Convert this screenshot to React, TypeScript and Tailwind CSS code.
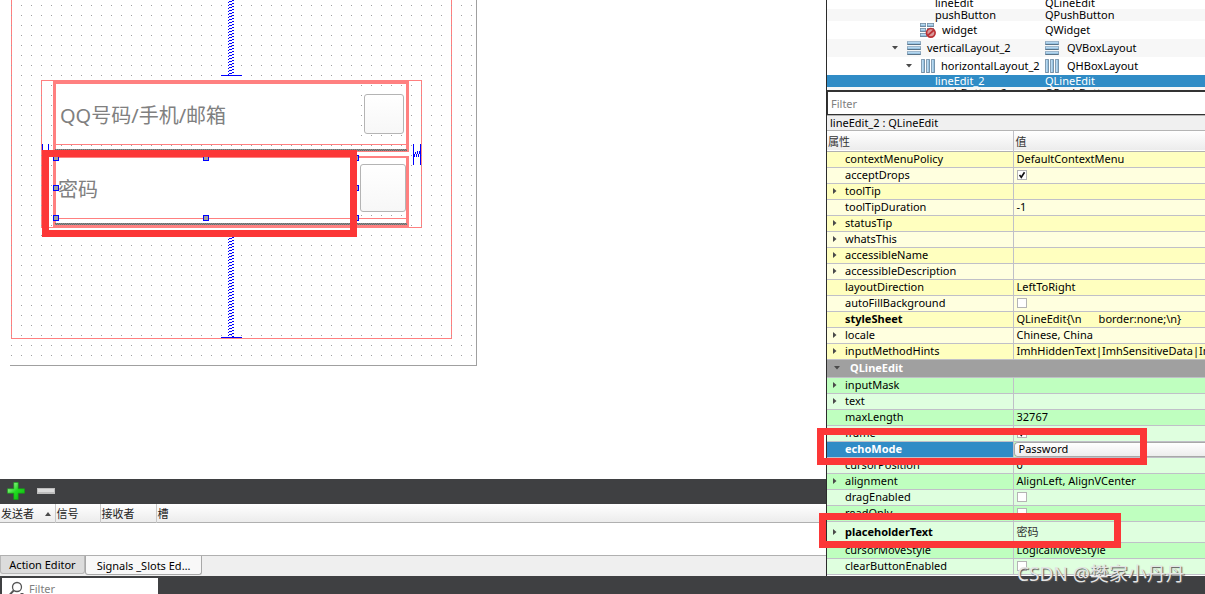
import React from "react";

type Tone = "yellow" | "green";

interface Prop {
  name: string;
  value?: string;
  check?: boolean;
  expandable?: boolean;
  bold?: boolean;
  tall?: boolean;
}

const WIDGET_PROPS: Prop[] = [
  { name: "contextMenuPolicy", value: "DefaultContextMenu" },
  { name: "acceptDrops", check: true },
  { name: "toolTip", expandable: true },
  { name: "toolTipDuration", value: "-1" },
  { name: "statusTip", expandable: true },
  { name: "whatsThis", expandable: true },
  { name: "accessibleName", expandable: true },
  { name: "accessibleDescription", expandable: true },
  { name: "layoutDirection", value: "LeftToRight" },
  { name: "autoFillBackground", check: false },
  { name: "styleSheet", value: "QLineEdit{\\n      border:none;\\n}", bold: true },
  { name: "locale", value: "Chinese, China", expandable: true },
  { name: "inputMethodHints", value: "ImhHiddenText|ImhSensitiveData|ImhNoAutoUppercase", expandable: true },
];

const LINE_EDIT_PROPS: Prop[] = [
  { name: "inputMask", expandable: true },
  { name: "text", expandable: true },
  { name: "maxLength", value: "32767" },
  { name: "frame", check: true },
  { name: "echoMode", value: "Password" },
  { name: "cursorPosition", value: "0" },
  { name: "alignment", value: "AlignLeft, AlignVCenter", expandable: true },
  { name: "dragEnabled", check: false },
  { name: "readOnly", check: false },
  { name: "placeholderText", value: "密码", expandable: true, bold: true, tall: true },
  { name: "cursorMoveStyle", value: "LogicalMoveStyle" },
  { name: "clearButtonEnabled", check: false },
];

const ROW_COLOURS: Record<Tone, [string, string]> = {
  yellow: ["bg-[#ffffbf]", "bg-[#ffffdf]"],
  green: ["bg-[#bfffbf]", "bg-[#dfffdf]"],
};

function Closed() {
  return (
    <svg width="4" height="6" viewBox="0 0 4 6" className="shrink-0" aria-hidden="true">
      <path d="M0 0L3.5 3L0 6Z" fill="#4a4a4a" />
    </svg>
  );
}

function Open() {
  return (
    <svg width="6" height="4" viewBox="0 0 6 4" className="shrink-0" aria-hidden="true">
      <path d="M0 0H6L3 3.5Z" fill="#4a4a4a" />
    </svg>
  );
}

function LayoutDefs() {
  return (
    <svg width="0" height="0" className="absolute" aria-hidden="true">
      <defs>
        <linearGradient id="barV" x1="0" y1="0" x2="0" y2="1">
          <stop offset="0" stopColor="#cfe8fa" />
          <stop offset="1" stopColor="#86b6d8" />
        </linearGradient>
        <linearGradient id="barH" x1="0" y1="0" x2="1" y2="0">
          <stop offset="0" stopColor="#cfe8fa" />
          <stop offset="1" stopColor="#86b6d8" />
        </linearGradient>
      </defs>
    </svg>
  );
}

function VBoxIcon() {
  return (
    <svg width="14" height="14" viewBox="0 0 14 14" className="shrink-0" aria-hidden="true">
      {[0, 5, 10].map((y) => (
        <g key={y}>
          <rect x="0" y={y} width="14" height="4" rx="0.8" fill="#7d97ad" />
          <rect x="0.7" y={y + 0.6} width="12.6" height="2.6" fill="url(#barV)" />
          <rect x="0.5" y={y + 3.2} width="13" height="0.8" fill="#51697d" />
        </g>
      ))}
    </svg>
  );
}

function HBoxIcon() {
  return (
    <svg width="14" height="14" viewBox="0 0 14 14" className="shrink-0" aria-hidden="true">
      {[0, 5, 10].map((x) => (
        <g key={x}>
          <rect x={x} y="0" width="4" height="14" rx="0.8" fill="#718ba1" />
          <rect x={x + 0.8} y="0.7" width="2.4" height="12.4" fill="url(#barH)" />
        </g>
      ))}
    </svg>
  );
}

function BrokenLayoutIcon() {
  return (
    <svg width="16" height="16" viewBox="0 0 16 16" className="shrink-0" aria-hidden="true">
      {[
        [0, 1, 6],
        [7, 1, 7],
        [0, 6, 6],
        [7, 6, 7],
        [0, 11, 7],
      ].map(([x, y, w]) => (
        <g key={`${x}-${y}`}>
          <rect x={x} y={y} width={w} height="4" fill="#718ba1" />
          <rect x={x + 0.7} y={y + 0.8} width={w - 1.4} height="2.2" fill="url(#barV)" />
        </g>
      ))}
      <circle cx="10.8" cy="10.8" r="4.3" fill="#d99a9a" stroke="#bb3034" strokeWidth="1.7" />
      <path d="M7.6 13.6L14 8" stroke="#bb3034" strokeWidth="1.7" />
    </svg>
  );
}

function TreeRow({
  name,
  type,
  pad,
  row = "h-3",
  shade = "bg-white",
  open = false,
  icon,
  typeIcon,
}: {
  name: string;
  type: string;
  pad: string;
  row?: string;
  shade?: string;
  open?: boolean;
  icon?: React.ReactNode;
  typeIcon?: React.ReactNode;
}) {
  return (
    <tr className={shade}>
      <td className="p-0">
        <div className={`flex items-center whitespace-nowrap ${row} ${pad}`}>
          {open && (
            <span className="mr-2 flex w-2 justify-center">
              <Open />
            </span>
          )}
          {icon && <span className="mr-1.5 flex">{icon}</span>}
          {name}
        </div>
      </td>
      <td className="p-0">
        <div className={`flex items-center gap-2 whitespace-nowrap ${row}`}>
          {typeIcon}
          {type}
        </div>
      </td>
    </tr>
  );
}

function ObjectTree() {
  return (
    <div className="flex h-[90px] flex-col overflow-hidden">
      <table className="-mt-[3px] w-full shrink-0 table-fixed border-collapse leading-3">
        <colgroup>
          <col className="w-[218px]" />
          <col />
        </colgroup>
        <tbody>
          <TreeRow name="lineEdit" type="QLineEdit" pad="pl-[108px]" />
          <TreeRow name="pushButton" type="QPushButton" pad="pl-[108px]" shade="bg-[#f7f7f7]" />
          <TreeRow name="widget" type="QWidget" pad="pl-[93px]" row="h-[18px]" icon={<BrokenLayoutIcon />} />
          <TreeRow
            name="verticalLayout_2"
            type="QVBoxLayout"
            pad="pl-16"
            row="h-[18px]"
            shade="bg-[#f7f7f7]"
            open
            icon={<VBoxIcon />}
            typeIcon={<VBoxIcon />}
          />
          <TreeRow
            name="horizontalLayout_2"
            type="QHBoxLayout"
            pad="pl-[78px]"
            row="h-[18px]"
            open
            icon={<HBoxIcon />}
            typeIcon={<HBoxIcon />}
          />
          <TreeRow name="lineEdit_2" type="QLineEdit" pad="pl-[108px]" shade="bg-[#308cc6] text-white" />
          <TreeRow name="pushButton_2" type="QPushButton" pad="pl-[108px]" shade="bg-[#f7f7f7]" />
        </tbody>
      </table>
    </div>
  );
}

function CheckBox({ checked, label }: { checked: boolean; label: string }) {
  return (
    <span className="relative flex size-2.5">
      <input
        type="checkbox"
        defaultChecked={checked}
        aria-label={label}
        className="peer size-2.5 appearance-none border border-[#b4b4b4] bg-white"
      />
      <svg
        viewBox="0 0 10 10"
        className="pointer-events-none absolute inset-0 hidden size-2.5 peer-checked:block"
        aria-hidden="true"
      >
        <path d="M2.5 5L4.3 7.3L7.5 2.3" fill="none" stroke="#111" strokeWidth="1.6" />
      </svg>
    </span>
  );
}

function PropertyRow({ prop, tone, index }: { prop: Prop; tone: Tone; index: number }) {
  const selected = prop.name === "echoMode";
  const height = prop.tall ? "h-5" : "h-[15px]";
  const nameStyle = selected ? "bg-[#308cc6] text-white font-bold" : prop.bold ? "font-bold" : "";
  return (
    <tr className={`border-b border-[#c0c0c8] ${ROW_COLOURS[tone][index % 2]}`}>
      <td className={`border-r border-[#c0c0c8] p-0 ${nameStyle}`}>
        <div className={`flex items-center whitespace-nowrap ${height}`}>
          <span className="flex w-[18px] shrink-0 pl-1.5">{prop.expandable && <Closed />}</span>
          {prop.name}
        </div>
      </td>
      <td className="p-0">
        {selected ? (
          <div className="flex h-[15px]">
            <select
              aria-label={prop.name}
              className="h-[15px] w-full appearance-none rounded-l-sm border border-r-0 border-[#a8a8a8] bg-linear-to-b from-white to-[#ededed] pl-1 leading-3"
            >
              <option>{prop.value}</option>
            </select>
          </div>
        ) : (
          <div className={`flex items-center overflow-hidden pl-[3px] whitespace-pre ${height} ${prop.tall ? "text-[#333]" : ""}`}>
            {prop.check === undefined ? prop.value : <CheckBox checked={prop.check} label={prop.name} />}
          </div>
        )}
      </td>
    </tr>
  );
}

function PropertyEditor() {
  return (
    <table className="w-full table-fixed border-collapse leading-[14px]">
      <colgroup>
        <col className="w-[186px]" />
        <col />
      </colgroup>
      <thead>
        <tr className="border-b border-[#b0b0b0] bg-linear-to-b from-white to-[#ececec] text-left text-[#333]">
          <th className="h-5 border-r border-[#c0c0c8] p-0 pt-0.5 pl-px font-normal">属性</th>
          <th className="h-5 p-0 pt-0.5 pl-0.5 font-normal">值</th>
        </tr>
      </thead>
      <tbody>
        {WIDGET_PROPS.map((p, i) => (
          <PropertyRow key={p.name} prop={p} tone="yellow" index={i} />
        ))}
        <tr className="border-b border-[#c0c0c8] bg-[#a0a0a0] font-bold text-white">
          <td colSpan={2} className="p-0">
            <div className="flex h-[17px] items-center pl-[7px]">
              <span className="flex w-4">
                <Open />
              </span>
              QLineEdit
            </div>
          </td>
        </tr>
        {LINE_EDIT_PROPS.map((p, i) => (
          <PropertyRow key={p.name} prop={p} tone="green" index={i} />
        ))}
      </tbody>
    </table>
  );
}

const HANDLES: [number, number][] = [
  [53, 155], [203, 155], [353, 155],
  [53, 185], [353, 185],
  [53, 215], [203, 215], [353, 215],
];

function FormCanvas() {
  const pushButton = "absolute rounded-[3px] border border-[#b4b4b4] bg-linear-to-b from-white to-[#f7f7f7]";
  const lineEdit =
    "absolute bg-white pt-0.5 text-[20px] leading-6 text-[#808080] outline-none placeholder:text-[#808080] placeholder:opacity-100";
  return (
    <div className="relative h-[366px] w-[477px]">
      <svg width="477" height="366" viewBox="0 0 477 366" className="absolute inset-0" shapeRendering="crispEdges" aria-hidden="true">
        <defs>
          <pattern id="grid" width="10" height="10" patternUnits="userSpaceOnUse">
            <rect x="1" y="5" width="1" height="1" fill="#a0a0a0" />
          </pattern>
          <pattern id="coil" width="6" height="3" x="228" y="0" patternUnits="userSpaceOnUse">
            <path d="M0 2.5H1M1 1.5H4M4 0.5H6" stroke="#0000ff" />
          </pattern>
          <pattern id="hatch" width="2" height="2" patternUnits="userSpaceOnUse">
            <rect width="2" height="2" fill="#8c8c8c" />
            <rect width="1" height="1" fill="#6a6a6a" />
            <rect x="1" y="1" width="1" height="1" fill="#6a6a6a" />
          </pattern>
        </defs>
        <path d="M10 365.5H476.5V0" fill="none" stroke="#a0a0a0" />
        <path d="M11.5 0V338.5H451.5V0" fill="none" stroke="#ff8080" />
        <rect x="41.5" y="80.5" width="380" height="147" fill="none" stroke="#ff8080" />
        <rect x="10" y="0" width="466" height="365" fill="url(#grid)" />
        <rect x="54" y="152" width="355" height="4" fill="#fff" />
        <g fill="#ff8080">
          <rect x="53" y="80" width="356" height="4" />
          <rect x="53" y="80" width="3" height="71" />
          <rect x="406" y="80" width="3" height="71" />
          <rect x="53" y="144" width="356" height="1" />
          <rect x="53" y="151" width="356" height="1" />
          <rect x="53" y="156" width="356" height="2" />
          <rect x="53" y="156" width="3" height="72" />
          <rect x="406" y="156" width="3" height="72" />
          <rect x="53" y="218" width="356" height="1" />
          <rect x="53" y="225" width="356" height="3" />
        </g>
        <rect x="55" y="149" width="352" height="2" fill="url(#hatch)" />
        <rect x="55" y="223" width="352" height="2" fill="url(#hatch)" />
        <rect x="228" y="0" width="6" height="75" fill="url(#coil)" />
        <rect x="228" y="237" width="6" height="100" fill="url(#coil)" />
        <path d="M221 75.5H242M221 337.5H242M42.5 144V165M48.5 144V165M413.5 144V165M420.5 144V165" stroke="#0000ff" />
        <path d="M414.5 154V157M415.5 152V154M416.5 154V157M417.5 151V154M418.5 154V157M419.5 151V154" stroke="#0000ff" />
      </svg>
      <input aria-label="QQ号码/手机/邮箱" placeholder="QQ号码/手机/邮箱" className={`${lineEdit} top-[84px] left-14 h-[60px] w-[304px] pl-1`} />
      <input aria-label="密码" type="password" placeholder="密码" className={`${lineEdit} top-[158px] left-14 h-[60px] w-[301px] pl-0.5`} />
      <button type="button" aria-label="pushButton" className={`${pushButton} top-[94px] left-[364px] size-10`} />
      <button type="button" aria-label="pushButton_2" className={`${pushButton} top-[164px] left-[360px] h-12 w-[46px]`} />
      <svg width="477" height="366" viewBox="0 0 477 366" className="pointer-events-none absolute inset-0" shapeRendering="crispEdges" aria-hidden="true">
        {HANDLES.map(([x, y]) => (
          <rect key={`${x}-${y}`} x={x + 0.5} y={y + 0.5} width="5" height="5" fill="#a0a0a0" stroke="#0000ff" />
        ))}
      </svg>
      <div className="pointer-events-none absolute top-[150px] left-[42px] h-[87px] w-[315px] border-[7px] border-[#fc3737]" />
    </div>
  );
}

function SignalsDock() {
  return (
    <section className="flex flex-col">
      <div className="flex h-[25px] items-center gap-3 bg-[#3f4042] pl-[7px]">
        <button type="button" aria-label="Add">
          <svg width="18" height="18" viewBox="0 0 18 18" className="block" aria-hidden="true">
            <defs>
              <linearGradient id="plus" x1="0" y1="0" x2="1" y2="1">
                <stop offset="0" stopColor="#c8f9bc" />
                <stop offset="0.5" stopColor="#22dd22" />
                <stop offset="1" stopColor="#0ab50a" />
              </linearGradient>
            </defs>
            <path d="M6.8 0.5H11.2V6.8H17.5V11.2H11.2V17.5H6.8V11.2H0.5V6.8H6.8Z" fill="url(#plus)" stroke="#12a512" strokeWidth="0.6" />
          </svg>
        </button>
        <button type="button" aria-label="Remove">
          <svg width="18" height="6" viewBox="0 0 18 6" className="block" aria-hidden="true">
            <rect width="18" height="6" fill="#bdbdbd" />
            <rect x="1" y="1" width="16" height="3" fill="#dcdcdc" />
          </svg>
        </button>
      </div>
      <table className="w-full table-fixed border-collapse leading-[14px]">
        <thead>
          <tr className="border-b border-[#b0b0b0] bg-linear-to-b from-white to-[#ececec] text-left text-[#222]">
            <th className="h-[19px] w-[55px] border-r border-[#c8c8c8] p-0 pt-0.5 font-normal">
              <div className="flex items-center justify-between pr-1 pl-px">
                发送者
                <svg width="6" height="4" viewBox="0 0 6 4" aria-hidden="true">
                  <path d="M0 4H6L3 0Z" fill="#4a4a4a" />
                </svg>
              </div>
            </th>
            <th className="h-[19px] w-[45px] border-r border-[#c8c8c8] p-0 pt-0.5 pl-px font-normal">信号</th>
            <th className="h-[19px] w-14 border-r border-[#c8c8c8] p-0 pt-0.5 pl-px font-normal">接收者</th>
            <th className="h-[19px] p-0 pt-0.5 pl-px font-normal">槽</th>
          </tr>
        </thead>
      </table>
      <div className="h-8 bg-white" />
      <div className="flex h-[21px] items-start border-t border-[#b0b0b0] bg-[#efefef]" role="tablist">
        <button type="button" role="tab" aria-selected="false" className="h-[18px] w-[85px] rounded-b-[3px] border border-t-0 border-[#b8b8b8] bg-[#dcdcdc] leading-[17px]">
          Action Editor
        </button>
        <button type="button" role="tab" aria-selected="true" className="h-[19px] w-[117px] rounded-b-[3px] border border-t-0 border-[#a8a8a8] bg-[#f8f8f8] pt-px leading-[17px]">
          Signals _Slots Ed…
        </button>
      </div>
    </section>
  );
}

export default function App() {
  return (
    <div className="flex min-h-screen flex-col overflow-hidden bg-white font-['Noto_Sans','Noto_Sans_CJK_SC',sans-serif] text-[11px] text-black">
      <LayoutDefs />
      <div className="flex flex-1">
        <main className="flex min-w-0 flex-1 flex-col">
          <div className="flex-1">
            <FormCanvas />
          </div>
          <SignalsDock />
        </main>
        <aside className="relative w-[379px] shrink-0 border-l border-[#2b2b2b]">
          <ObjectTree />
          <input
            aria-label="Filter properties"
            placeholder="Filter"
            className="block h-[25px] w-full border-t-2 border-b border-l border-[#333] pl-[3px] placeholder:text-[#808080]"
          />
          <div className="h-4 border-y border-[#b4b4b4] bg-[#f0f0f0] pl-[3px] leading-[14px]">lineEdit_2 : QLineEdit</div>
          <PropertyEditor />
          <div className="pointer-events-none absolute top-[428px] -left-2.5 h-[37px] w-[330px] border-[7px] border-[#fc3737]" />
          <div className="pointer-events-none absolute top-[513px] -left-2 h-[35px] w-[302px] border-[7px] border-[#fc3737]" />
          <div className="pointer-events-none absolute top-[562px] left-[190px] text-[19px] leading-6 whitespace-nowrap text-[#e4e4e4] [text-shadow:1px_1px_1px_#555]">
            CSDN @樊家小丹丹
          </div>
        </aside>
      </div>
      <footer className="h-[18px] overflow-hidden bg-[#3f4042] pt-0.5 pl-0.5">
        <label className="flex h-[22px] w-[156px] items-center bg-white pl-1.5">
          <svg width="17" height="16" viewBox="0 0 17 16" fill="none" stroke="#555" className="mr-1 shrink-0" aria-hidden="true">
            <circle cx="9" cy="6" r="4.5" strokeWidth="1.3" />
            <path d="M5.8 9.4L1.5 14" strokeWidth="2" />
            <path d="M12 12H16L14 14Z" fill="#555" stroke="none" />
          </svg>
          <input aria-label="Filter" placeholder="Filter" className="min-w-0 flex-1 outline-none placeholder:text-[#808080]" />
        </label>
      </footer>
    </div>
  );
}
